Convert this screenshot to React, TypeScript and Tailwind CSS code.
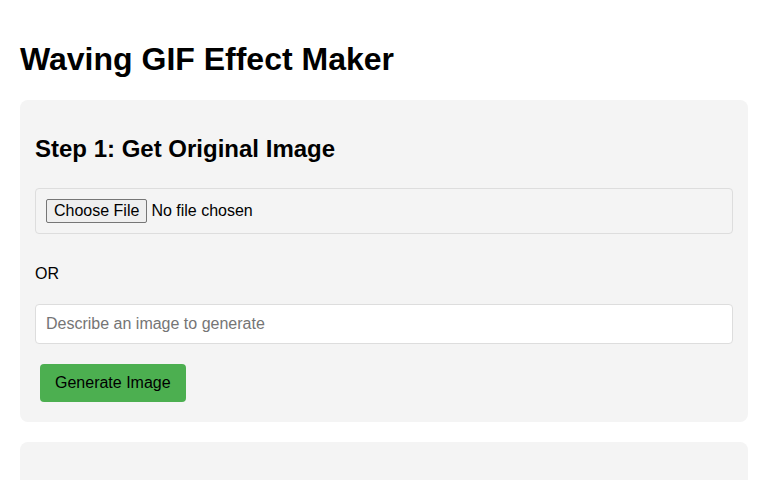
export default function App() {
  return (
    <div className="min-h-screen bg-white p-5 text-black" style={{ fontFamily: '"Liberation Sans", Arial, sans-serif' }}>
      <h1 className="mt-[21px] mb-[22px] text-[32px] font-bold leading-[37px]">Waving GIF Effect Maker</h1>

      {/* Step 1 */}
      <div className="mb-5 rounded-lg bg-[#f4f4f4] p-[15px]">
        <h2 className="mt-[20px] mb-[20px] text-2xl font-bold leading-[28px]">Step 1: Get Original Image</h2>

        <div className="mt-[25px] rounded border border-[#dddddd] bg-[#f4f4f4] p-[10px]">
          <input
            type="file"
            className="text-base leading-[18px] file:mr-[4px] file:rounded-[2px] file:border file:border-solid file:border-[#767676] file:bg-[#efefef] file:px-[7px] file:py-[2px] file:text-black"
          />
        </div>

        <p className="mt-[31px] mb-[21px] text-base leading-[18px]">OR</p>

        <input
          type="text"
          placeholder="Describe an image to generate"
          className="block h-10 w-full rounded border border-[#dddddd] bg-white px-[10px] text-base placeholder:text-[#757575] outline-none"
        />

        <button className="m-[5px] mt-5 rounded bg-[#4caf50] px-[15px] py-[10px] text-base leading-[18px] text-black">
          Generate Image
        </button>
      </div>

      {/* Step 2 */}
      <div className="h-40 rounded-lg bg-[#f4f4f4]" />
    </div>
  )
}
